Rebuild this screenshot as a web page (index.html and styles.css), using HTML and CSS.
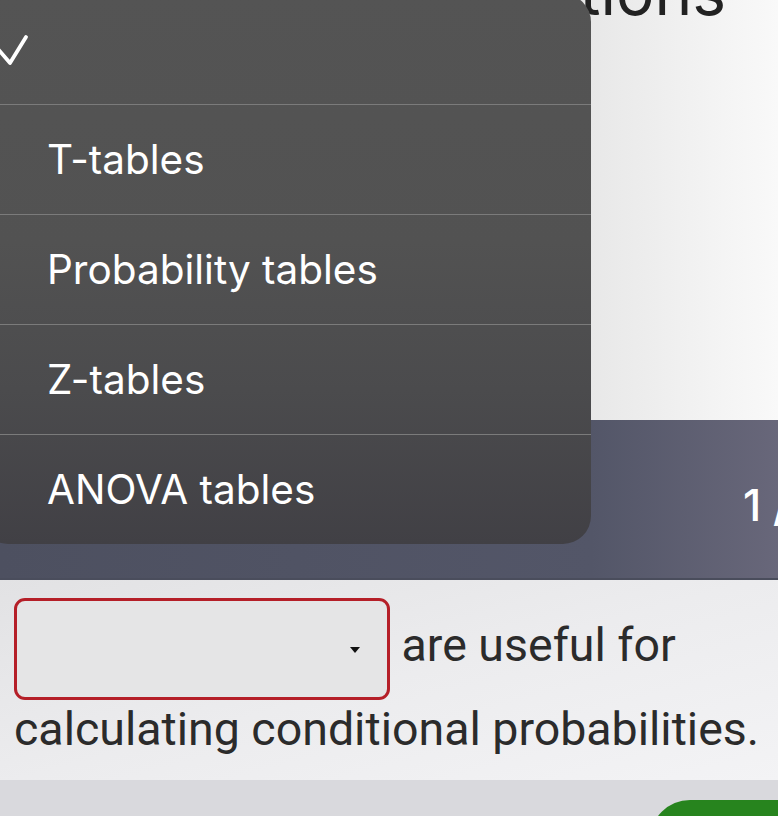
FILE: index.html
```html
<!DOCTYPE html>
<html lang="en">
<head>
<meta charset="utf-8">
<title>Quiz</title>
<link rel="stylesheet" href="styles.css">
</head>
<body>
<div class="page">
  <header class="top">
    <h1 class="title">Questions</h1>
  </header>
  <section class="band">
    <span class="counter">1 / 10</span>
  </section>
  <section class="question">
    <p class="prompt"><span class="select"><span class="arrow"></span></span> are useful for calculating conditional probabilities.</p>
  </section>
  <footer class="bottom">
    <span class="next"></span>
  </footer>

  <div class="menu">
    <div class="item checked">
      <svg class="check" width="44" height="44" viewBox="0 0 44 44"><path d="M6 20 L19 35 L35 9" fill="none" stroke="#fff" stroke-width="3.8" stroke-linecap="round" stroke-linejoin="round"/></svg>
    </div>
    <div class="item">T-tables</div>
    <div class="item">Probability tables</div>
    <div class="item">Z-tables</div>
    <div class="item">ANOVA tables</div>
  </div>
</div>
</body>
</html>
```

FILE: styles.css
```css
html, body {
  margin: 0;
  padding: 0;
}
body {
  width: 778px;
  height: 816px;
  overflow: hidden;
  font-family: Inter, "Liberation Sans", sans-serif;
}
.page {
  position: relative;
  width: 778px;
  height: 816px;
  overflow: hidden;
}
.top {
  height: 420px;
  background: linear-gradient(90deg, #dedede 0%, #e8e8e8 76%, #f9f9f9 100%);
  overflow: hidden;
}
.title {
  margin: -40px 0 0 0;
  padding-right: 52px;
  text-align: right;
  font-family: Inter, "Liberation Sans", sans-serif;
  font-weight: 400;
  font-size: 64px;
  line-height: 64px;
  color: #222222;
}
.band {
  box-sizing: border-box;
  height: 160px;
  border-bottom: 2px solid #4a4d5c;
  background: linear-gradient(90deg, #4d5060 0%, #535668 76%, #68677a 100%);
  display: flex;
  align-items: flex-start;
  padding-left: 743px;
  white-space: nowrap;
}
.counter {
  margin-top: 59px;
  color: #ffffff;
  font-family: Inter, "Liberation Sans", sans-serif;
  font-weight: 500;
  font-size: 44px;
  line-height: 53px;
}
.question {
  height: 200px;
  box-sizing: border-box;
  padding: 18px 14px 0 14px;
  background: linear-gradient(165deg, #e2e2e4 0%, #ececee 50%, #f3f3f5 100%);
}
.prompt {
  margin: 0;
  font-family: Roboto, "Liberation Sans", sans-serif;
  font-size: 46.5px;
  line-height: 58px;
  color: #2b2b2b;
}
.select {
  display: inline-block;
  vertical-align: middle;
  position: relative;
  width: 376px;
  height: 102px;
  box-sizing: border-box;
  border: 3.5px solid #b51f28;
  border-radius: 11px;
  background: #e5e5e6;
}
.arrow {
  position: absolute;
  right: 27px;
  top: 46px;
  width: 0;
  height: 0;
  border-left: 5.5px solid transparent;
  border-right: 5.5px solid transparent;
  border-top: 6.5px solid #111111;
}
.bottom {
  height: 36px;
  background: #d9d9dd;
  padding-top: 20px;
  box-sizing: border-box;
  overflow: hidden;
}
.next {
  display: block;
  margin-left: 650px;
  width: 220px;
  height: 80px;
  border-radius: 44px;
  background: #27841e;
}
.menu {
  position: absolute;
  left: -20px;
  top: -6px;
  width: 611px;
  border-radius: 28px;
  overflow: hidden;
  background: linear-gradient(180deg, #545454 0%, #525252 45%, #4b4b4d 72%, #414045 100%);
}
.item {
  height: 109px;
  border-top: 1px solid #7b7b7b;
  display: flex;
  align-items: center;
  padding-left: 67px;
  color: #ffffff;
  font-family: Inter, "Liberation Sans", sans-serif;
  font-size: 40.5px;
}
.item.checked {
  height: 110px;
  border-top: none;
  padding-left: 0;
  position: relative;
}
.check {
  position: absolute;
  left: 11px;
  top: 34px;
}
```
